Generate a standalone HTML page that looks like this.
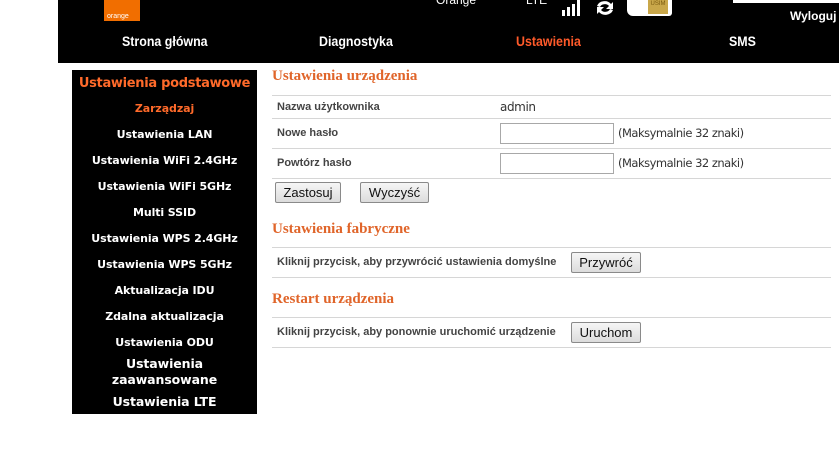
<!DOCTYPE html>
<html><head><meta charset="utf-8"><style>
*{margin:0;padding:0;box-sizing:border-box}
body{width:839px;height:468px;background:#fff;position:relative;overflow:hidden;font-family:"Liberation Sans",Arial,sans-serif}
.a{position:absolute;white-space:nowrap}
#hdr{position:absolute;left:58px;top:0;width:781px;height:63px;background:#000}
.nav{position:absolute;top:34px;font:bold 13.5px "Liberation Sans",sans-serif;color:#fff;transform:scaleX(.92);transform-origin:left}
#side{position:absolute;left:72px;top:70px;width:185px;height:344px;background:#000}
.m{position:absolute;left:0;width:185px;text-align:center;color:#fff;font:bold 11px "DejaVu Sans",Verdana,sans-serif;letter-spacing:-.1px}
.h{font-family:"Liberation Serif",Georgia,serif;font-weight:bold;font-size:15px;color:#e0652a}
.ln{position:absolute;left:272px;width:559px;height:1px;background:#d6d6d6}
.lb{font-size:11px;color:#444;font-weight:bold}
.btn{position:absolute;height:21px;border:1px solid #8a8a8a;background:linear-gradient(#f6f6f6,#dcdcdc);font:13px "Liberation Sans",sans-serif;color:#111;text-align:center;line-height:19px;border-radius:2px}
.inp{position:absolute;left:500px;width:114px;height:21px;border:1px solid #a8a8a8;background:#fff}
.mx{font:11.5px "DejaVu Sans",Tahoma,sans-serif;color:#333;letter-spacing:-.5px}
</style></head><body>
<div id="hdr"></div>
<div class="a" style="left:104px;top:0;width:36px;height:21px;background:#f16e00"><span style="position:absolute;left:3px;bottom:1px;font-size:7px;color:#fff">orange</span></div>
<div class="a" style="left:436px;top:-7px;color:#fff;font-size:12px">Orange</div>
<div class="a" style="left:526px;top:-7px;color:#fff;font-size:12px">LTE</div>
<svg class="a" style="left:560px;top:0" width="24" height="16"><rect x="2" y="10" width="3" height="6" fill="#fff"/><rect x="7" y="7" width="3" height="9" fill="#fff"/><rect x="12" y="4" width="3" height="12" fill="#fff"/><rect x="17" y="0" width="3" height="16" fill="#fff"/></svg>
<svg class="a" style="left:593px;top:0" width="24" height="16"><path d="M4 6a8 7 0 0 1 14-2l2-2v7h-7l3-3a5 4 0 0 0-9 1z M20 10a8 7 0 0 1-14 2l-2 2v-7h7l-3 3a5 4 0 0 0 9-1z" fill="#fff"/></svg>
<div class="a" style="left:627px;top:0;width:45px;height:16px;background:#fff;border-radius:0 0 3px 6px"></div>
<div class="a" style="left:648px;top:0;width:20px;height:14px;background:#c9a74a;font-size:6px;color:#7a5a10;text-align:center;line-height:8px">USIM</div>
<div class="a" style="left:733px;top:0;width:106px;height:3px;background:#fff"></div>
<div class="a" style="left:790px;top:9px;color:#fff;font:bold 12px 'Liberation Sans',sans-serif">Wyloguj</div>
<div class="nav" style="left:122px">Strona główna</div>
<div class="nav" style="left:319px">Diagnostyka</div>
<div class="nav" style="left:516px;color:#ff5a2a">Ustawienia</div>
<div class="nav" style="left:729px">SMS</div>

<div id="side">
<div class="m" style="top:6px;color:#ff6a2a;font-size:13px;letter-spacing:-.3px">Ustawienia podstawowe</div>
<div class="m" style="top:32px;color:#ff6a2a">Zarządzaj</div>
<div class="m" style="top:58px">Ustawienia LAN</div>
<div class="m" style="top:84px">Ustawienia WiFi 2.4GHz</div>
<div class="m" style="top:110px">Ustawienia WiFi 5GHz</div>
<div class="m" style="top:136px">Multi SSID</div>
<div class="m" style="top:162px">Ustawienia WPS 2.4GHz</div>
<div class="m" style="top:188px">Ustawienia WPS 5GHz</div>
<div class="m" style="top:214px">Aktualizacja IDU</div>
<div class="m" style="top:240px">Zdalna aktualizacja</div>
<div class="m" style="top:266px">Ustawienia ODU</div>
<div class="m" style="top:286px;font-size:12.5px;line-height:16px">Ustawienia<br>zaawansowane</div>
<div class="m" style="top:324px;font-size:12.5px">Ustawienia LTE</div>
</div>

<div class="a h" style="left:272px;top:68px">Ustawienia urządzenia</div>
<div class="ln" style="top:95px"></div>
<div class="a lb" style="left:277px;top:101px">Nazwa użytkownika</div>
<div class="a" style="left:500px;top:100px;font:12px 'DejaVu Sans',Tahoma,sans-serif;color:#333;letter-spacing:-.4px">admin</div>
<div class="ln" style="top:118px"></div>
<div class="a lb" style="left:277px;top:127px">Nowe hasło</div>
<div class="inp" style="top:123px"></div>
<div class="a mx" style="left:618px;top:126px">(Maksymalnie 32 znaki)</div>
<div class="ln" style="top:148px"></div>
<div class="a lb" style="left:277px;top:157px">Powtórz hasło</div>
<div class="inp" style="top:153px"></div>
<div class="a mx" style="left:618px;top:156px">(Maksymalnie 32 znaki)</div>
<div class="ln" style="top:178px"></div>
<div class="btn" style="left:275px;top:182px;width:66px">Zastosuj</div>
<div class="btn" style="left:360px;top:182px;width:69px">Wyczyść</div>

<div class="a h" style="left:272px;top:221px">Ustawienia fabryczne</div>
<div class="ln" style="top:247px"></div>
<div class="a lb" style="left:277px;top:256px">Kliknij przycisk, aby przywrócić ustawienia domyślne</div>
<div class="btn" style="left:571px;top:252px;width:70px">Przywróć</div>
<div class="ln" style="top:277px"></div>
<div class="a h" style="left:272px;top:291px">Restart urządzenia</div>
<div class="ln" style="top:317px"></div>
<div class="a lb" style="left:277px;top:326px">Kliknij przycisk, aby ponownie uruchomić urządzenie</div>
<div class="btn" style="left:571px;top:322px;width:70px">Uruchom</div>
<div class="ln" style="top:347px"></div>
</body></html>
